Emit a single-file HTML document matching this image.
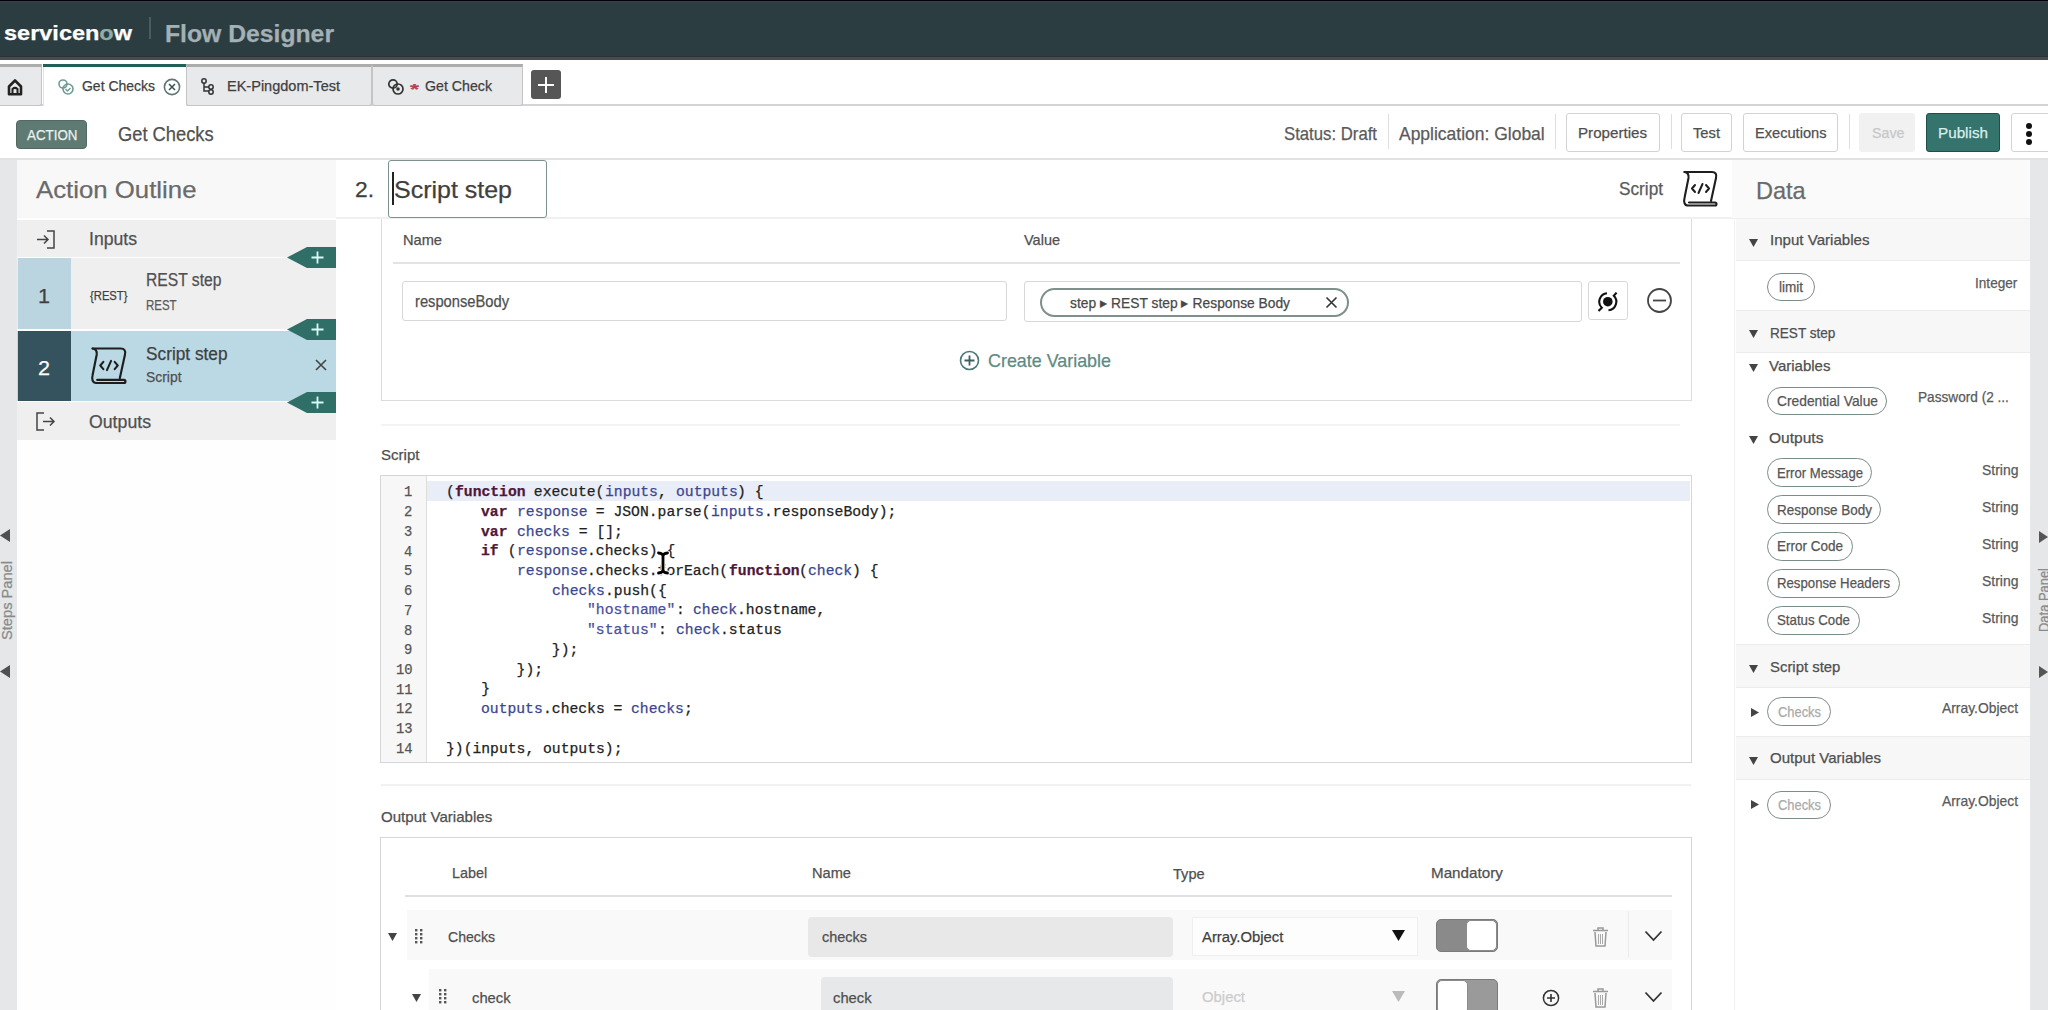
<!DOCTYPE html><html><head><meta charset="utf-8"><style>
html,body{margin:0;padding:0;}
body{width:2048px;height:1010px;overflow:hidden;position:relative;background:#fff;font-family:"Liberation Sans",sans-serif;}
.t{position:absolute;white-space:pre;transform-origin:0 0;-webkit-text-stroke:0.25px currentColor;}
.r{position:absolute;box-sizing:border-box;}
</style></head><body>
<div class="r" style="left:0px;top:0px;width:2048px;height:60px;background:#2c3d42;"></div>
<div class="r" style="left:0px;top:0px;width:2048px;height:1px;background:#02040a;"></div>
<div class="r" style="left:0px;top:1px;width:2048px;height:2px;background:#363c43;"></div>
<div class="r" style="left:0px;top:56px;width:2048px;height:1px;background:#293133;"></div>
<div class="r" style="left:0px;top:57px;width:2048px;height:3px;background:#474c4f;"></div>
<div class="t" style="left:4.00px;top:22.22px;font-size:21px;line-height:21px;color:#ffffff;font-weight:bold;transform:scaleX(1.1189);">servicen<span style="color:#8fada6">o</span>w</div>
<div class="r" style="left:149px;top:17px;width:2px;height:22px;background:#4b5b60;"></div>
<div class="t" style="left:165.00px;top:22.53px;font-size:23px;line-height:23px;color:#a3b0b4;font-weight:bold;transform:scaleX(1.0751);">Flow Designer</div>
<div class="r" style="left:0px;top:60px;width:2048px;height:46px;background:#ffffff;"></div>
<div class="r" style="left:0px;top:104px;width:2048px;height:2px;background:#d4d4d4;"></div>
<div class="r" style="left:-2px;top:64px;width:44px;height:42px;background:#e8e9eb;border:1px solid #c4c4c4;border-top:3px solid #acacac;border-radius:0 0 3px 0;"></div>
<svg class="r" style="left:7px;top:78px" width="16" height="18" viewBox="0 0 16 18"><path d="M2 8.5 L8 2.5 L14 8.5 V16.2 H2 Z" fill="none" stroke="#222" stroke-width="2.6" stroke-linejoin="round"/><path d="M5.5 16 V11 Q8 8.8 10.5 11 V16" fill="none" stroke="#222" stroke-width="2"/></svg>
<div class="r" style="left:43px;top:64px;width:144px;height:42px;background:#ffffff;border-left:1px solid #e2e2e2;border-right:1px solid #e2e2e2;"></div>
<div class="r" style="left:43px;top:64px;width:144px;height:3px;background:#225f59;"></div>
<svg class="r" style="left:57px;top:78px" width="17" height="17" viewBox="0 0 17 17"><circle cx="6" cy="6" r="4" fill="none" stroke="#6d9b93" stroke-width="1.6"/><circle cx="11" cy="11" r="5" fill="none" stroke="#6d9b93" stroke-width="1.6"/><path d="M8.5 11 l2 2 l3-3" fill="none" stroke="#6d9b93" stroke-width="1.4"/></svg>
<div class="t" style="left:82.00px;top:78.30px;font-size:15px;line-height:15px;color:#3f3f3f;transform:scaleX(0.9316);">Get Checks</div>
<svg class="r" style="left:163px;top:78px" width="18" height="18" viewBox="0 0 18 18"><circle cx="9" cy="9" r="7.6" fill="none" stroke="#5e7773" stroke-width="1.6"/><path d="M6 6 L12 12 M12 6 L6 12" stroke="#3e504d" stroke-width="1.5"/></svg>
<div class="r" style="left:186px;top:64px;width:186px;height:42px;background:#e8e9eb;border:1px solid #c4c4c4;border-top:3px solid #acacac;border-radius:0 0 3px 3px;"></div>
<svg class="r" style="left:201px;top:78px" width="14" height="17" viewBox="0 0 14 17"><circle cx="3" cy="3" r="2.2" fill="none" stroke="#333" stroke-width="1.5"/><path d="M3 5 V13 H8 M3 9 H8" fill="none" stroke="#333" stroke-width="1.5"/><circle cx="10" cy="9" r="2.2" fill="none" stroke="#333" stroke-width="1.5"/><circle cx="10" cy="14" r="2.2" fill="none" stroke="#333" stroke-width="1.5"/></svg>
<div class="t" style="left:227.00px;top:77.80px;font-size:15px;line-height:15px;color:#3f3f3f;transform:scaleX(0.9682);">EK-Pingdom-Test</div>
<div class="r" style="left:372px;top:64px;width:151px;height:42px;background:#e8e9eb;border:1px solid #c4c4c4;border-top:3px solid #acacac;border-radius:0 0 3px 3px;"></div>
<svg class="r" style="left:387px;top:78px" width="18" height="18" viewBox="0 0 18 18"><circle cx="6" cy="6" r="4.2" fill="none" stroke="#333" stroke-width="1.7"/><circle cx="11" cy="11" r="5" fill="none" stroke="#333" stroke-width="1.7"/><circle cx="11" cy="11" r="1.8" fill="#333"/></svg>
<div class="t" style="left:409.50px;top:80.80px;font-size:15px;line-height:15px;color:#b8404f;font-weight:bold;transform:scaleX(1.5419);">*</div>
<div class="t" style="left:425.00px;top:77.80px;font-size:15px;line-height:15px;color:#3f3f3f;transform:scaleX(0.9455);">Get Check</div>
<div class="r" style="left:531px;top:70px;width:30px;height:29px;background:#565656;border-radius:3px;"></div>
<div class="r" style="left:538px;top:83.5px;width:16px;height:2.0px;background:#fff;"></div>
<div class="r" style="left:545px;top:76.5px;width:2px;height:16.0px;background:#fff;"></div>
<div class="r" style="left:0px;top:106px;width:2048px;height:52px;background:#ffffff;"></div>
<div class="r" style="left:0px;top:158px;width:2048px;height:2px;background:#e2e2e2;"></div>
<div class="r" style="left:16px;top:120px;width:71px;height:29px;background:#5f7a72;border:1px solid #53695f;border-radius:4px;"></div>
<div class="t" style="left:26.50px;top:127.72px;font-size:14.5px;line-height:14.5px;color:#e8f2ee;transform:scaleX(0.9219);">ACTION</div>
<div class="t" style="left:118.00px;top:123.87px;font-size:20px;line-height:20px;color:#505050;transform:scaleX(0.9150);">Get Checks</div>
<div class="t" style="left:1284.00px;top:125.14px;font-size:18.5px;line-height:18.5px;color:#5a5a5a;transform:scaleX(0.9045);">Status: Draft</div>
<div class="r" style="left:1388px;top:114px;width:1px;height:35px;background:#dedede;"></div>
<div class="t" style="left:1398.80px;top:125.14px;font-size:18.5px;line-height:18.5px;color:#5a5a5a;transform:scaleX(0.9445);">Application: Global</div>
<div class="r" style="left:1555px;top:114px;width:1px;height:35px;background:#dedede;"></div>
<div class="r" style="left:1566px;top:113px;width:94px;height:39px;background:#fff;border:1px solid #d2d2d2;border-radius:3px;"></div>
<div class="t" style="left:1578.00px;top:124.88px;font-size:15.5px;line-height:15.5px;color:#4f4f4f;transform:scaleX(0.9767);">Properties</div>
<div class="r" style="left:1671px;top:114px;width:1px;height:35px;background:#dedede;"></div>
<div class="r" style="left:1681px;top:113px;width:51px;height:39px;background:#fff;border:1px solid #d2d2d2;border-radius:3px;"></div>
<div class="t" style="left:1692.70px;top:124.88px;font-size:15.5px;line-height:15.5px;color:#4f4f4f;transform:scaleX(0.9498);">Test</div>
<div class="r" style="left:1743px;top:113px;width:95px;height:39px;background:#fff;border:1px solid #d2d2d2;border-radius:3px;"></div>
<div class="t" style="left:1755.00px;top:124.88px;font-size:15.5px;line-height:15.5px;color:#4f4f4f;transform:scaleX(0.9430);">Executions</div>
<div class="r" style="left:1849px;top:114px;width:1px;height:35px;background:#dedede;"></div>
<div class="r" style="left:1859px;top:113px;width:56px;height:39px;background:#f1f1f1;border-radius:3px;"></div>
<div class="t" style="left:1871.60px;top:124.88px;font-size:15.5px;line-height:15.5px;color:#c8c8c8;transform:scaleX(0.9171);">Save</div>
<div class="r" style="left:1926px;top:113px;width:74px;height:39px;background:#35736d;border:1px solid #1f4f4a;border-radius:3px;"></div>
<div class="t" style="left:1938.00px;top:124.88px;font-size:15.5px;line-height:15.5px;color:#d9efec;transform:scaleX(0.9835);">Publish</div>
<div class="r" style="left:2011px;top:113px;width:49px;height:39px;background:#fff;border:1px solid #d2d2d2;border-radius:3px;"></div>
<div class="r" style="left:2026px;top:123px;width:6px;height:6px;border-radius:3px;background:#111;"></div>
<div class="r" style="left:2026px;top:131px;width:6px;height:6px;border-radius:3px;background:#111;"></div>
<div class="r" style="left:2026px;top:139px;width:6px;height:6px;border-radius:3px;background:#111;"></div>
<div class="r" style="left:0px;top:160px;width:17px;height:850px;background:#e5e7e8;"></div>
<svg class="r" style="left:0px;top:529px" width="10" height="13" viewBox="0 0 10 13"><path d="M0 6.5 L10 0 V13 Z" fill="#505050"/></svg>
<svg class="r" style="left:0px;top:665px" width="10" height="13" viewBox="0 0 10 13"><path d="M0 6.5 L10 0 V13 Z" fill="#505050"/></svg>
<div class="t" style="left:-0.7px;top:639.5px;font-size:15px;line-height:15px;color:#8a8a8a;transform:rotate(-90deg) scaleX(0.9766);transform-origin:0 0;">Steps Panel</div>
<div class="r" style="left:17px;top:160px;width:319px;height:850px;background:#fefefe;"></div>
<div class="r" style="left:17px;top:160px;width:319px;height:58px;background:#f8f8f8;"></div>
<div class="t" style="left:36.00px;top:178.08px;font-size:24px;line-height:24px;color:#6a6a6a;transform:scaleX(1.0742);">Action Outline</div>
<div class="r" style="left:17px;top:220px;width:319px;height:37px;background:#efefef;"></div>
<svg class="r" style="left:35px;top:229px" width="21" height="21" viewBox="0 0 21 21"><path d="M12 2 H19 V19 H12" fill="none" stroke="#444" stroke-width="1.5"/><path d="M2 10.5 H13 M9 6.5 L13 10.5 L9 14.5" fill="none" stroke="#444" stroke-width="1.5"/></svg>
<div class="t" style="left:89.00px;top:230.78px;font-size:17.5px;line-height:17.5px;color:#4f4f4f;transform:scaleX(1.0069);">Inputs</div>
<div class="r" style="left:17px;top:258px;width:319px;height:71px;background:#efefef;"></div>
<div class="r" style="left:18px;top:258px;width:53px;height:71px;background:#bad5e0;"></div>
<div class="t" style="left:38.00px;top:285.22px;font-size:21px;line-height:21px;color:#3f3f3f;transform:scaleX(1.0274);">1</div>
<div class="t" style="left:89.50px;top:288.99px;font-size:13px;line-height:13px;color:#3f3f3f;transform:scaleX(0.8649);">{REST}</div>
<div class="t" style="left:145.50px;top:272.18px;font-size:17.5px;line-height:17.5px;color:#4f4f4f;transform:scaleX(0.8956);">REST step</div>
<div class="t" style="left:145.50px;top:298.15px;font-size:14px;line-height:14px;color:#5a5a5a;transform:scaleX(0.8168);">REST</div>
<div class="r" style="left:17px;top:331px;width:319px;height:70px;background:#bbd9e4;"></div>
<div class="r" style="left:18px;top:331px;width:53px;height:70px;background:#34535e;"></div>
<div class="t" style="left:38.00px;top:357.22px;font-size:21px;line-height:21px;color:#ffffff;transform:scaleX(1.0274);">2</div>
<svg class="r" style="left:90px;top:346px" width="37" height="39" viewBox="0 0 36 37"><g fill="none" stroke="#1e1e1e" stroke-width="2.1" stroke-linejoin="round" stroke-linecap="round"><path d="M2.5 2 H30 C33.5 2 35 4.5 34 8 L29 31"/><path d="M2.5 2 C5.5 2.5 7 4.5 6.5 8 L2.5 28 C1.5 32 2.5 35.5 6 35.5 H33 C35 35.5 35 32.5 33 32.5 H7"/></g><g fill="none" stroke="#1e1e1e" stroke-width="2" stroke-linecap="round" stroke-linejoin="round"><path d="M13 15 L10 18.5 L13 22 M24 15 L27 18.5 L24 22 M20.5 14 L16.5 23"/></g></svg>
<div class="t" style="left:145.50px;top:345.88px;font-size:17.5px;line-height:17.5px;color:#3f3f3f;transform:scaleX(0.9858);">Script step</div>
<div class="t" style="left:145.50px;top:370.15px;font-size:14px;line-height:14px;color:#4f4f4f;transform:scaleX(0.9920);">Script</div>
<svg class="r" style="left:315px;top:359px" width="12" height="12" viewBox="0 0 12 12"><path d="M1 1 L11 11 M11 1 L1 11" stroke="#444" stroke-width="1.6"/></svg>
<div class="r" style="left:17px;top:402px;width:319px;height:38px;background:#efefef;"></div>
<svg class="r" style="left:35px;top:411px" width="21" height="21" viewBox="0 0 21 21"><path d="M9 2 H2 V19 H9" fill="none" stroke="#444" stroke-width="1.5"/><path d="M8 10.5 H19 M15 6.5 L19 10.5 L15 14.5" fill="none" stroke="#444" stroke-width="1.5"/></svg>
<div class="t" style="left:89.00px;top:414.18px;font-size:17.5px;line-height:17.5px;color:#4f4f4f;transform:scaleX(1.0117);">Outputs</div>
<svg class="r" style="left:287px;top:246.5px" width="49" height="21" viewBox="0 0 49 21"><path d="M0 10.5 L20 0 H49 V21 H20 Z" fill="#2f6f68"/><path d="M24.5 10.5 H36.5 M30.5 4.5 V16.5" stroke="#d8fbf6" stroke-width="1.8"/></svg>
<svg class="r" style="left:287px;top:318.5px" width="49" height="21" viewBox="0 0 49 21"><path d="M0 10.5 L20 0 H49 V21 H20 Z" fill="#2f6f68"/><path d="M24.5 10.5 H36.5 M30.5 4.5 V16.5" stroke="#d8fbf6" stroke-width="1.8"/></svg>
<svg class="r" style="left:287px;top:391.5px" width="49" height="21" viewBox="0 0 49 21"><path d="M0 10.5 L20 0 H49 V21 H20 Z" fill="#2f6f68"/><path d="M24.5 10.5 H36.5 M30.5 4.5 V16.5" stroke="#d8fbf6" stroke-width="1.8"/></svg>
<div class="r" style="left:336px;top:160px;width:1399px;height:58px;background:#fff;"></div>
<div class="r" style="left:336px;top:217px;width:1399px;height:2px;background:#f0f0f0;"></div>
<div class="t" style="left:355.40px;top:179.37px;font-size:22px;line-height:22px;color:#3f3f3f;transform:scaleX(1.0356);">2.</div>
<div class="r" style="left:388px;top:160px;width:159px;height:58px;background:#fff;border:1.5px solid #7d928e;border-radius:3px;"></div>
<div class="r" style="left:392px;top:172px;width:2px;height:33px;background:#222;"></div>
<div class="t" style="left:393.70px;top:177.88px;font-size:24px;line-height:24px;color:#3f3f3f;transform:scaleX(1.0407);">Script step</div>
<div class="t" style="left:1619.00px;top:180.58px;font-size:17.5px;line-height:17.5px;color:#5a5a5a;transform:scaleX(0.9836);">Script</div>
<svg class="r" style="left:1682px;top:170px" width="36" height="37" viewBox="0 0 36 37"><g fill="none" stroke="#1e1e1e" stroke-width="2.1" stroke-linejoin="round" stroke-linecap="round"><path d="M2.5 2 H30 C33.5 2 35 4.5 34 8 L29 31"/><path d="M2.5 2 C5.5 2.5 7 4.5 6.5 8 L2.5 28 C1.5 32 2.5 35.5 6 35.5 H33 C35 35.5 35 32.5 33 32.5 H7"/></g><g fill="none" stroke="#1e1e1e" stroke-width="2" stroke-linecap="round" stroke-linejoin="round"><path d="M13 15 L10 18.5 L13 22 M24 15 L27 18.5 L24 22 M20.5 14 L16.5 23"/></g></svg>
<div class="r" style="left:381px;top:219px;width:1311px;height:182px;background:#fff;border:1px solid #dcdcdc;border-top:none;"></div>
<div class="t" style="left:402.50px;top:232.30px;font-size:15px;line-height:15px;color:#4f4f4f;transform:scaleX(0.9747);">Name</div>
<div class="t" style="left:1023.50px;top:232.30px;font-size:15px;line-height:15px;color:#4f4f4f;transform:scaleX(0.9664);">Value</div>
<div class="r" style="left:393px;top:262px;width:1287px;height:2px;background:#e3e3e3;"></div>
<div class="r" style="left:402px;top:281px;width:605px;height:40px;background:#fff;border:1px solid #d8d8d8;border-radius:3px;"></div>
<div class="t" style="left:415.00px;top:293.85px;font-size:16px;line-height:16px;color:#4f4f4f;transform:scaleX(0.9189);">responseBody</div>
<div class="r" style="left:1024px;top:281px;width:558px;height:41px;background:#fff;border:1px solid #d8d8d8;border-radius:3px;"></div>
<div class="r" style="left:1040px;top:287.7px;width:309px;height:28.900000000000034px;background:#fff;border:2px solid #7f908c;border-radius:15px;"></div>
<div class="t" style="left:1069.70px;top:295.30px;font-size:15px;line-height:15px;color:#484848;transform:scaleX(0.9199);">step ▸ REST step ▸ Response Body</div>
<svg class="r" style="left:1325px;top:296px" width="13" height="13" viewBox="0 0 13 13"><path d="M1.5 1.5 L11.5 11.5 M11.5 1.5 L1.5 11.5" stroke="#333" stroke-width="1.6"/></svg>
<div class="r" style="left:1588px;top:281px;width:40px;height:39px;background:#fff;border:1px solid #d8d8d8;border-radius:3px;"></div>
<svg class="r" style="left:1597px;top:290px" width="22" height="22" viewBox="0 0 22 22"><circle cx="10.8" cy="11.7" r="4.8" fill="#111"/><path d="M10.0 3.2 A8.5 8.5 0 0 0 4.8 17.7 L1.5 21" fill="none" stroke="#111" stroke-width="2.1"/><path d="M19.6 2.6 L16.8 5.7 A8.5 8.5 0 0 1 11.5 20.2" fill="none" stroke="#111" stroke-width="2.1"/></svg>
<svg class="r" style="left:1646px;top:287px" width="27" height="27" viewBox="0 0 27 27"><circle cx="13.5" cy="13.5" r="11.5" fill="none" stroke="#444" stroke-width="1.8"/><path d="M7 13.5 H20" stroke="#444" stroke-width="1.8"/></svg>
<svg class="r" style="left:959px;top:350px" width="21" height="21" viewBox="0 0 21 21"><circle cx="10.5" cy="10.5" r="9" fill="none" stroke="#4d7873" stroke-width="1.6"/><path d="M5.5 10.5 H15.5 M10.5 5.5 V15.5" stroke="#3e605c" stroke-width="1.8"/></svg>
<div class="t" style="left:988.00px;top:351.41px;font-size:19px;line-height:19px;color:#5e8a84;transform:scaleX(0.9417);">Create Variable</div>
<div class="r" style="left:381px;top:424px;width:1299px;height:2px;background:#f3f3f3;"></div>
<div class="t" style="left:380.50px;top:447.30px;font-size:15px;line-height:15px;color:#4f4f4f;transform:scaleX(1.0041);">Script</div>
<div class="r" style="left:380px;top:475px;width:1312px;height:288px;background:#fff;border:1px solid #d6d6d6;"></div>
<div class="r" style="left:381px;top:476px;width:46px;height:286px;background:#f7f7f7;border-right:1px solid #dddddd;"></div>
<div class="r" style="left:427px;top:481px;width:1263px;height:20px;background:#e9edf7;"></div>
<div class="t" style="left:404.20px;top:485.42px;font-size:14.2px;line-height:14.2px;color:#555555;font-family:'Liberation Mono',monospace;transform:scaleX(0.9741);">1</div>
<div class="t" style="left:446.00px;top:485.04px;font-size:14.7px;line-height:14.7px;color:#222222;font-family:'Liberation Mono',monospace;transform:scaleX(1.0010);">(</div>
<div class="t" style="left:454.83px;top:485.04px;font-size:14.7px;line-height:14.7px;color:#4f1838;font-weight:bold;font-family:'Liberation Mono',monospace;transform:scaleX(1.0010);">function</div>
<div class="t" style="left:525.47px;top:485.04px;font-size:14.7px;line-height:14.7px;color:#222222;font-family:'Liberation Mono',monospace;transform:scaleX(1.0010);"> execute(</div>
<div class="t" style="left:604.94px;top:485.04px;font-size:14.7px;line-height:14.7px;color:#3b4690;font-family:'Liberation Mono',monospace;transform:scaleX(1.0010);">inputs</div>
<div class="t" style="left:657.92px;top:485.04px;font-size:14.7px;line-height:14.7px;color:#222222;font-family:'Liberation Mono',monospace;transform:scaleX(1.0010);">, </div>
<div class="t" style="left:675.58px;top:485.04px;font-size:14.7px;line-height:14.7px;color:#3b4690;font-family:'Liberation Mono',monospace;transform:scaleX(1.0010);">outputs</div>
<div class="t" style="left:737.39px;top:485.04px;font-size:14.7px;line-height:14.7px;color:#222222;font-family:'Liberation Mono',monospace;transform:scaleX(1.0010);">) {</div>
<div class="t" style="left:404.20px;top:505.15px;font-size:14.2px;line-height:14.2px;color:#555555;font-family:'Liberation Mono',monospace;transform:scaleX(0.9741);">2</div>
<div class="t" style="left:481.32px;top:504.77px;font-size:14.7px;line-height:14.7px;color:#4f1838;font-weight:bold;font-family:'Liberation Mono',monospace;transform:scaleX(1.0010);">var</div>
<div class="t" style="left:516.64px;top:504.77px;font-size:14.7px;line-height:14.7px;color:#3b4690;font-family:'Liberation Mono',monospace;transform:scaleX(1.0010);">response</div>
<div class="t" style="left:587.28px;top:504.77px;font-size:14.7px;line-height:14.7px;color:#222222;font-family:'Liberation Mono',monospace;transform:scaleX(1.0010);"> = JSON.parse(</div>
<div class="t" style="left:710.90px;top:504.77px;font-size:14.7px;line-height:14.7px;color:#3b4690;font-family:'Liberation Mono',monospace;transform:scaleX(1.0010);">inputs</div>
<div class="t" style="left:763.88px;top:504.77px;font-size:14.7px;line-height:14.7px;color:#222222;font-family:'Liberation Mono',monospace;transform:scaleX(1.0010);">.responseBody);</div>
<div class="t" style="left:404.20px;top:524.88px;font-size:14.2px;line-height:14.2px;color:#555555;font-family:'Liberation Mono',monospace;transform:scaleX(0.9741);">3</div>
<div class="t" style="left:481.32px;top:524.50px;font-size:14.7px;line-height:14.7px;color:#4f1838;font-weight:bold;font-family:'Liberation Mono',monospace;transform:scaleX(1.0010);">var</div>
<div class="t" style="left:516.64px;top:524.50px;font-size:14.7px;line-height:14.7px;color:#3b4690;font-family:'Liberation Mono',monospace;transform:scaleX(1.0010);">checks</div>
<div class="t" style="left:569.62px;top:524.50px;font-size:14.7px;line-height:14.7px;color:#222222;font-family:'Liberation Mono',monospace;transform:scaleX(1.0010);"> = [];</div>
<div class="t" style="left:404.20px;top:544.61px;font-size:14.2px;line-height:14.2px;color:#555555;font-family:'Liberation Mono',monospace;transform:scaleX(0.9741);">4</div>
<div class="t" style="left:481.32px;top:544.23px;font-size:14.7px;line-height:14.7px;color:#4f1838;font-weight:bold;font-family:'Liberation Mono',monospace;transform:scaleX(1.0010);">if</div>
<div class="t" style="left:498.98px;top:544.23px;font-size:14.7px;line-height:14.7px;color:#222222;font-family:'Liberation Mono',monospace;transform:scaleX(1.0010);"> (</div>
<div class="t" style="left:516.64px;top:544.23px;font-size:14.7px;line-height:14.7px;color:#3b4690;font-family:'Liberation Mono',monospace;transform:scaleX(1.0010);">response</div>
<div class="t" style="left:587.28px;top:544.23px;font-size:14.7px;line-height:14.7px;color:#222222;font-family:'Liberation Mono',monospace;transform:scaleX(1.0010);">.checks) {</div>
<div class="t" style="left:404.20px;top:564.34px;font-size:14.2px;line-height:14.2px;color:#555555;font-family:'Liberation Mono',monospace;transform:scaleX(0.9741);">5</div>
<div class="t" style="left:516.64px;top:563.96px;font-size:14.7px;line-height:14.7px;color:#3b4690;font-family:'Liberation Mono',monospace;transform:scaleX(1.0010);">response</div>
<div class="t" style="left:587.28px;top:563.96px;font-size:14.7px;line-height:14.7px;color:#222222;font-family:'Liberation Mono',monospace;transform:scaleX(1.0010);">.checks.forEach(</div>
<div class="t" style="left:728.56px;top:563.96px;font-size:14.7px;line-height:14.7px;color:#4f1838;font-weight:bold;font-family:'Liberation Mono',monospace;transform:scaleX(1.0010);">function</div>
<div class="t" style="left:799.20px;top:563.96px;font-size:14.7px;line-height:14.7px;color:#222222;font-family:'Liberation Mono',monospace;transform:scaleX(1.0010);">(</div>
<div class="t" style="left:808.03px;top:563.96px;font-size:14.7px;line-height:14.7px;color:#3b4690;font-family:'Liberation Mono',monospace;transform:scaleX(1.0010);">check</div>
<div class="t" style="left:852.18px;top:563.96px;font-size:14.7px;line-height:14.7px;color:#222222;font-family:'Liberation Mono',monospace;transform:scaleX(1.0010);">) {</div>
<div class="t" style="left:404.20px;top:584.07px;font-size:14.2px;line-height:14.2px;color:#555555;font-family:'Liberation Mono',monospace;transform:scaleX(0.9741);">6</div>
<div class="t" style="left:551.96px;top:583.69px;font-size:14.7px;line-height:14.7px;color:#3b4690;font-family:'Liberation Mono',monospace;transform:scaleX(1.0010);">checks</div>
<div class="t" style="left:604.94px;top:583.69px;font-size:14.7px;line-height:14.7px;color:#222222;font-family:'Liberation Mono',monospace;transform:scaleX(1.0010);">.push({</div>
<div class="t" style="left:404.20px;top:603.80px;font-size:14.2px;line-height:14.2px;color:#555555;font-family:'Liberation Mono',monospace;transform:scaleX(0.9741);">7</div>
<div class="t" style="left:587.28px;top:603.42px;font-size:14.7px;line-height:14.7px;color:#4a4fa0;font-family:'Liberation Mono',monospace;transform:scaleX(1.0010);">"hostname"</div>
<div class="t" style="left:675.58px;top:603.42px;font-size:14.7px;line-height:14.7px;color:#222222;font-family:'Liberation Mono',monospace;transform:scaleX(1.0010);">: </div>
<div class="t" style="left:693.24px;top:603.42px;font-size:14.7px;line-height:14.7px;color:#3b4690;font-family:'Liberation Mono',monospace;transform:scaleX(1.0010);">check</div>
<div class="t" style="left:737.39px;top:603.42px;font-size:14.7px;line-height:14.7px;color:#222222;font-family:'Liberation Mono',monospace;transform:scaleX(1.0010);">.hostname,</div>
<div class="t" style="left:404.20px;top:623.53px;font-size:14.2px;line-height:14.2px;color:#555555;font-family:'Liberation Mono',monospace;transform:scaleX(0.9741);">8</div>
<div class="t" style="left:587.28px;top:623.15px;font-size:14.7px;line-height:14.7px;color:#4a4fa0;font-family:'Liberation Mono',monospace;transform:scaleX(1.0010);">"status"</div>
<div class="t" style="left:657.92px;top:623.15px;font-size:14.7px;line-height:14.7px;color:#222222;font-family:'Liberation Mono',monospace;transform:scaleX(1.0010);">: </div>
<div class="t" style="left:675.58px;top:623.15px;font-size:14.7px;line-height:14.7px;color:#3b4690;font-family:'Liberation Mono',monospace;transform:scaleX(1.0010);">check</div>
<div class="t" style="left:719.73px;top:623.15px;font-size:14.7px;line-height:14.7px;color:#222222;font-family:'Liberation Mono',monospace;transform:scaleX(1.0010);">.status</div>
<div class="t" style="left:404.20px;top:643.26px;font-size:14.2px;line-height:14.2px;color:#555555;font-family:'Liberation Mono',monospace;transform:scaleX(0.9741);">9</div>
<div class="t" style="left:446.00px;top:642.88px;font-size:14.7px;line-height:14.7px;color:#222222;font-family:'Liberation Mono',monospace;transform:scaleX(1.0010);">            });</div>
<div class="t" style="left:395.90px;top:662.99px;font-size:14.2px;line-height:14.2px;color:#555555;font-family:'Liberation Mono',monospace;transform:scaleX(0.9741);">10</div>
<div class="t" style="left:446.00px;top:662.61px;font-size:14.7px;line-height:14.7px;color:#222222;font-family:'Liberation Mono',monospace;transform:scaleX(1.0010);">        });</div>
<div class="t" style="left:395.90px;top:682.72px;font-size:14.2px;line-height:14.2px;color:#555555;font-family:'Liberation Mono',monospace;transform:scaleX(0.9741);">11</div>
<div class="t" style="left:446.00px;top:682.34px;font-size:14.7px;line-height:14.7px;color:#222222;font-family:'Liberation Mono',monospace;transform:scaleX(1.0010);">    }</div>
<div class="t" style="left:395.90px;top:702.45px;font-size:14.2px;line-height:14.2px;color:#555555;font-family:'Liberation Mono',monospace;transform:scaleX(0.9741);">12</div>
<div class="t" style="left:481.32px;top:702.07px;font-size:14.7px;line-height:14.7px;color:#3b4690;font-family:'Liberation Mono',monospace;transform:scaleX(1.0010);">outputs</div>
<div class="t" style="left:543.13px;top:702.07px;font-size:14.7px;line-height:14.7px;color:#222222;font-family:'Liberation Mono',monospace;transform:scaleX(1.0010);">.checks = </div>
<div class="t" style="left:631.43px;top:702.07px;font-size:14.7px;line-height:14.7px;color:#3b4690;font-family:'Liberation Mono',monospace;transform:scaleX(1.0010);">checks</div>
<div class="t" style="left:684.41px;top:702.07px;font-size:14.7px;line-height:14.7px;color:#222222;font-family:'Liberation Mono',monospace;transform:scaleX(1.0010);">;</div>
<div class="t" style="left:395.90px;top:722.18px;font-size:14.2px;line-height:14.2px;color:#555555;font-family:'Liberation Mono',monospace;transform:scaleX(0.9741);">13</div>
<div class="t" style="left:395.90px;top:741.91px;font-size:14.2px;line-height:14.2px;color:#555555;font-family:'Liberation Mono',monospace;transform:scaleX(0.9741);">14</div>
<div class="t" style="left:446.00px;top:741.53px;font-size:14.7px;line-height:14.7px;color:#222222;font-family:'Liberation Mono',monospace;transform:scaleX(1.0010);">})(inputs, outputs);</div>
<svg class="r" style="left:655px;top:550px" width="16" height="26" viewBox="0 0 16 26"><path d="M3.5 3 Q8 3.5 8 6 Q8 3.5 12.5 3 M8 5 V21 M3.5 23 Q8 22.5 8 20 Q8 22.5 12.5 23" fill="none" stroke="#fff" stroke-width="5" stroke-linecap="round"/><path d="M3.5 3 Q8 3.5 8 6 Q8 3.5 12.5 3 M8 5 V21 M3.5 23 Q8 22.5 8 20 Q8 22.5 12.5 23" fill="none" stroke="#000" stroke-width="2.8" stroke-linecap="round"/></svg>
<div class="r" style="left:381px;top:784px;width:1310px;height:2px;background:#f1f1f1;"></div>
<div class="t" style="left:380.50px;top:809.30px;font-size:15px;line-height:15px;color:#4f4f4f;transform:scaleX(1.0052);">Output Variables</div>
<div class="r" style="left:380px;top:837px;width:1312px;height:175px;background:#fff;border:1px solid #d6d6d6;"></div>
<div class="t" style="left:451.80px;top:865.30px;font-size:15px;line-height:15px;color:#4f4f4f;transform:scaleX(0.9590);">Label</div>
<div class="t" style="left:812.00px;top:865.30px;font-size:15px;line-height:15px;color:#4f4f4f;transform:scaleX(0.9747);">Name</div>
<div class="t" style="left:1173.00px;top:866.30px;font-size:15px;line-height:15px;color:#4f4f4f;transform:scaleX(0.9748);">Type</div>
<div class="t" style="left:1430.60px;top:865.30px;font-size:15px;line-height:15px;color:#4f4f4f;transform:scaleX(1.0131);">Mandatory</div>
<div class="r" style="left:405px;top:895px;width:1267px;height:2px;background:#e0e0e0;"></div>
<div class="r" style="left:407px;top:910px;width:1265px;height:50px;background:#f9f9f9;"></div>
<svg class="r" style="left:387.5px;top:933px" width="9" height="8" viewBox="0 0 9 8"><path d="M0 0 H9 L4.5 8 Z" fill="#444"/></svg>
<svg class="r" style="left:415px;top:929px" width="8" height="15" viewBox="0 0 8 15"><g fill="#555"><rect x="0" y="0" width="2.4" height="2.4"/><rect x="5" y="0" width="2.4" height="2.4"/><rect x="0" y="4" width="2.4" height="2.4"/><rect x="5" y="4" width="2.4" height="2.4"/><rect x="0" y="8" width="2.4" height="2.4"/><rect x="5" y="8" width="2.4" height="2.4"/><rect x="0" y="12" width="2.4" height="2.4"/><rect x="5" y="12" width="2.4" height="2.4"/></g></svg>
<div class="t" style="left:448.00px;top:928.88px;font-size:15.5px;line-height:15.5px;color:#4f4f4f;transform:scaleX(0.9094);">Checks</div>
<div class="r" style="left:808px;top:917px;width:365px;height:40px;background:#e8e8e8;border-radius:4px;"></div>
<div class="t" style="left:821.50px;top:928.88px;font-size:15.5px;line-height:15.5px;color:#4f4f4f;transform:scaleX(0.9328);">checks</div>
<div class="r" style="left:1192px;top:917px;width:226px;height:39px;background:#fdfdfd;border:1px solid #efefef;"></div>
<div class="t" style="left:1201.60px;top:928.88px;font-size:15.5px;line-height:15.5px;color:#3f3f3f;transform:scaleX(0.9578);">Array.Object</div>
<svg class="r" style="left:1392px;top:930px" width="13" height="11" viewBox="0 0 13 11"><path d="M0 0 H13 L6.5 11 Z" fill="#111"/></svg>
<div class="r" style="left:1436px;top:919px;width:62px;height:33px;background:#8a8a8a;border:1.5px solid #7a7a7a;border-radius:5px;"></div>
<div class="r" style="left:1466px;top:920px;width:31px;height:31px;background:#fff;border:1.5px solid #8a8a8a;border-radius:5px;"></div>
<svg class="r" style="left:1592px;top:927px" width="17" height="20" viewBox="0 0 17 20"><path d="M1 3.5 H16 M6 3 V1 H11 V3" fill="none" stroke="#999" stroke-width="1.5"/><path d="M3 5 L4 19 H13 L14 5" fill="none" stroke="#999" stroke-width="1.5"/><path d="M6.5 7 V17 M8.5 7 V17 M10.5 7 V17" stroke="#aaa" stroke-width="1"/></svg>
<div class="r" style="left:1628px;top:911px;width:1px;height:47px;background:#ececec;"></div>
<svg class="r" style="left:1644px;top:930px" width="19" height="13" viewBox="0 0 19 13"><path d="M1.5 1.5 L9.5 10 L17.5 1.5" fill="none" stroke="#333" stroke-width="1.8"/></svg>
<div class="r" style="left:429px;top:969px;width:1243px;height:41px;background:#f9f9f9;"></div>
<svg class="r" style="left:411.5px;top:994px" width="9" height="8" viewBox="0 0 9 8"><path d="M0 0 H9 L4.5 8 Z" fill="#444"/></svg>
<svg class="r" style="left:439px;top:989px" width="8" height="15" viewBox="0 0 8 15"><g fill="#555"><rect x="0" y="0" width="2.4" height="2.4"/><rect x="5" y="0" width="2.4" height="2.4"/><rect x="0" y="4" width="2.4" height="2.4"/><rect x="5" y="4" width="2.4" height="2.4"/><rect x="0" y="8" width="2.4" height="2.4"/><rect x="5" y="8" width="2.4" height="2.4"/><rect x="0" y="12" width="2.4" height="2.4"/><rect x="5" y="12" width="2.4" height="2.4"/></g></svg>
<div class="t" style="left:472.40px;top:989.88px;font-size:15.5px;line-height:15.5px;color:#4f4f4f;transform:scaleX(0.9533);">check</div>
<div class="r" style="left:821px;top:977px;width:352px;height:38px;background:#e6e8ea;border-radius:4px;"></div>
<div class="t" style="left:833.00px;top:989.88px;font-size:15.5px;line-height:15.5px;color:#4f4f4f;transform:scaleX(0.9533);">check</div>
<div class="t" style="left:1201.60px;top:988.88px;font-size:15.5px;line-height:15.5px;color:#cccccc;transform:scaleX(0.9599);">Object</div>
<svg class="r" style="left:1392px;top:991px" width="13" height="11" viewBox="0 0 13 11"><path d="M0 0 H13 L6.5 11 Z" fill="#bbb"/></svg>
<div class="r" style="left:1436px;top:979px;width:62px;height:36px;background:#9a9a9a;border:1.5px solid #7a7a7a;border-radius:5px;"></div>
<div class="r" style="left:1437px;top:980px;width:31px;height:34px;background:#fff;border:1.5px solid #8a8a8a;border-radius:5px;"></div>
<svg class="r" style="left:1542px;top:989px" width="18" height="18" viewBox="0 0 18 18"><circle cx="9" cy="9" r="7.6" fill="none" stroke="#333" stroke-width="1.5"/><path d="M5 9 H13 M9 5 V13" stroke="#333" stroke-width="1.6"/></svg>
<svg class="r" style="left:1592px;top:988px" width="17" height="20" viewBox="0 0 17 20"><path d="M1 3.5 H16 M6 3 V1 H11 V3" fill="none" stroke="#999" stroke-width="1.5"/><path d="M3 5 L4 19 H13 L14 5" fill="none" stroke="#999" stroke-width="1.5"/><path d="M6.5 7 V17 M8.5 7 V17 M10.5 7 V17" stroke="#aaa" stroke-width="1"/></svg>
<svg class="r" style="left:1644px;top:991px" width="19" height="13" viewBox="0 0 19 13"><path d="M1.5 1.5 L9.5 10 L17.5 1.5" fill="none" stroke="#333" stroke-width="1.8"/></svg>
<div class="r" style="left:1732px;top:160px;width:298px;height:850px;background:#ffffff;"></div>
<div class="r" style="left:1732px;top:160px;width:298px;height:58px;background:#fafafa;"></div>
<div class="r" style="left:1732px;top:218px;width:298px;height:1px;background:#efefef;"></div>
<div class="t" style="left:1756.00px;top:178.68px;font-size:24px;line-height:24px;color:#6a6a6a;transform:scaleX(0.9803);">Data</div>
<div class="r" style="left:1734px;top:219px;width:1px;height:791px;background:#f2f2f2;"></div>
<div class="r" style="left:2030px;top:160px;width:18px;height:850px;background:#e5e7e8;"></div>
<svg class="r" style="left:2039px;top:531px" width="9" height="12" viewBox="0 0 9 12"><path d="M9 6 L0 0 V12 Z" fill="#555"/></svg>
<svg class="r" style="left:2039px;top:666px" width="9" height="12" viewBox="0 0 9 12"><path d="M9 6 L0 0 V12 Z" fill="#555"/></svg>
<div class="t" style="left:2036.3px;top:632px;font-size:15px;line-height:15px;color:#8a8a8a;transform:rotate(-90deg) scaleX(0.8623);transform-origin:0 0;">Data Panel</div>
<div class="r" style="left:1736px;top:219px;width:294px;height:42px;background:#f7f7f7;border-bottom:1px solid #ececec;"></div>
<svg class="r" style="left:1749px;top:239px" width="9" height="8" viewBox="0 0 9 8"><path d="M0 0 H9 L4.5 8 Z" fill="#444"/></svg>
<div class="t" style="left:1770.00px;top:232.30px;font-size:15px;line-height:15px;color:#4f4f4f;transform:scaleX(1.0055);">Input Variables</div>
<div class="r" style="left:1736px;top:261px;width:294px;height:49px;background:#fff;"></div>
<div class="r" style="left:1767px;top:273px;width:48px;height:28px;background:#fff;border:1.8px solid #7a8d88;border-radius:15px;"></div>
<div class="t" style="left:1779.00px;top:280.02px;font-size:14.5px;line-height:14.5px;color:#555;transform:scaleX(0.9312);">limit</div>
<div class="t" style="left:1975.00px;top:275.72px;font-size:14.5px;line-height:14.5px;color:#5a5a5a;transform:scaleX(0.9392);">Integer</div>
<div class="r" style="left:1736px;top:310px;width:294px;height:43px;background:#f7f7f7;border-top:1px solid #ececec;border-bottom:1px solid #ececec;"></div>
<svg class="r" style="left:1749px;top:330px" width="9" height="8" viewBox="0 0 9 8"><path d="M0 0 H9 L4.5 8 Z" fill="#444"/></svg>
<div class="t" style="left:1770.00px;top:324.90px;font-size:15px;line-height:15px;color:#4f4f4f;transform:scaleX(0.9051);">REST step</div>
<svg class="r" style="left:1749px;top:364px" width="9" height="8" viewBox="0 0 9 8"><path d="M0 0 H9 L4.5 8 Z" fill="#444"/></svg>
<div class="t" style="left:1768.60px;top:358.30px;font-size:15px;line-height:15px;color:#4f4f4f;transform:scaleX(0.9996);">Variables</div>
<div class="r" style="left:1767px;top:386.6px;width:120px;height:28.399999999999977px;background:#fff;border:1.8px solid #7a8d88;border-radius:15px;"></div>
<div class="t" style="left:1776.50px;top:393.82px;font-size:14.5px;line-height:14.5px;color:#555;transform:scaleX(0.9516);">Credential Value</div>
<div class="t" style="left:1917.60px;top:389.72px;font-size:14.5px;line-height:14.5px;color:#5a5a5a;transform:scaleX(0.9400);">Password (2 ...</div>
<svg class="r" style="left:1749px;top:436px" width="9" height="8" viewBox="0 0 9 8"><path d="M0 0 H9 L4.5 8 Z" fill="#444"/></svg>
<div class="t" style="left:1768.60px;top:429.80px;font-size:15px;line-height:15px;color:#4f4f4f;transform:scaleX(1.0356);">Outputs</div>
<div class="r" style="left:1767px;top:457.8px;width:105px;height:29.69999999999999px;background:#fff;border:1.8px solid #7a8d88;border-radius:15px;"></div>
<div class="t" style="left:1776.50px;top:465.67px;font-size:14.5px;line-height:14.5px;color:#555;transform:scaleX(0.9044);">Error Message</div>
<div class="t" style="left:1981.50px;top:462.52px;font-size:14.5px;line-height:14.5px;color:#5a5a5a;transform:scaleX(0.9636);">String</div>
<div class="r" style="left:1767px;top:495.4px;width:114px;height:28.600000000000023px;background:#fff;border:1.8px solid #7a8d88;border-radius:15px;"></div>
<div class="t" style="left:1776.50px;top:502.72px;font-size:14.5px;line-height:14.5px;color:#555;transform:scaleX(0.9280);">Response Body</div>
<div class="t" style="left:1981.50px;top:500.12px;font-size:14.5px;line-height:14.5px;color:#5a5a5a;transform:scaleX(0.9636);">String</div>
<div class="r" style="left:1767px;top:532px;width:86px;height:28.799999999999955px;background:#fff;border:1.8px solid #7a8d88;border-radius:15px;"></div>
<div class="t" style="left:1777.00px;top:539.42px;font-size:14.5px;line-height:14.5px;color:#555;transform:scaleX(0.9307);">Error Code</div>
<div class="t" style="left:1981.50px;top:536.72px;font-size:14.5px;line-height:14.5px;color:#5a5a5a;transform:scaleX(0.9636);">String</div>
<div class="r" style="left:1767px;top:569px;width:133px;height:28.600000000000023px;background:#fff;border:1.8px solid #7a8d88;border-radius:15px;"></div>
<div class="t" style="left:1777.00px;top:576.32px;font-size:14.5px;line-height:14.5px;color:#555;transform:scaleX(0.9103);">Response Headers</div>
<div class="t" style="left:1981.50px;top:573.72px;font-size:14.5px;line-height:14.5px;color:#5a5a5a;transform:scaleX(0.9636);">String</div>
<div class="r" style="left:1767px;top:606px;width:93px;height:28.799999999999955px;background:#fff;border:1.8px solid #7a8d88;border-radius:15px;"></div>
<div class="t" style="left:1777.00px;top:613.42px;font-size:14.5px;line-height:14.5px;color:#555;transform:scaleX(0.9148);">Status Code</div>
<div class="t" style="left:1981.50px;top:610.72px;font-size:14.5px;line-height:14.5px;color:#5a5a5a;transform:scaleX(0.9636);">String</div>
<div class="r" style="left:1736px;top:644px;width:294px;height:43.5px;background:#f7f7f7;border-top:1px solid #ececec;border-bottom:1px solid #ececec;"></div>
<svg class="r" style="left:1749px;top:665px" width="9" height="8" viewBox="0 0 9 8"><path d="M0 0 H9 L4.5 8 Z" fill="#444"/></svg>
<div class="t" style="left:1769.60px;top:659.00px;font-size:15px;line-height:15px;color:#4f4f4f;transform:scaleX(0.9935);">Script step</div>
<svg class="r" style="left:1750.5px;top:707.5px" width="8" height="9" viewBox="0 0 8 9"><path d="M0 0 L8 4.5 L0 9 Z" fill="#444"/></svg>
<div class="r" style="left:1767px;top:697.4px;width:64px;height:28.600000000000023px;background:#fff;border:1.8px solid #7d8d89;border-radius:15px;"></div>
<div class="t" style="left:1777.50px;top:704.72px;font-size:14.5px;line-height:14.5px;color:#aaaaaa;transform:scaleX(0.8893);">Checks</div>
<div class="t" style="left:1942.00px;top:700.72px;font-size:14.5px;line-height:14.5px;color:#5a5a5a;transform:scaleX(0.9559);">Array.Object</div>
<div class="r" style="left:1736px;top:736px;width:294px;height:44px;background:#f7f7f7;border-top:1px solid #ececec;border-bottom:1px solid #ececec;"></div>
<svg class="r" style="left:1749px;top:757px" width="9" height="8" viewBox="0 0 9 8"><path d="M0 0 H9 L4.5 8 Z" fill="#444"/></svg>
<div class="t" style="left:1769.60px;top:750.10px;font-size:15px;line-height:15px;color:#4f4f4f;transform:scaleX(1.0025);">Output Variables</div>
<svg class="r" style="left:1750.5px;top:799.5px" width="8" height="9" viewBox="0 0 8 9"><path d="M0 0 L8 4.5 L0 9 Z" fill="#444"/></svg>
<div class="r" style="left:1767px;top:790.5px;width:64px;height:28.5px;background:#fff;border:1.8px solid #7d8d89;border-radius:15px;"></div>
<div class="t" style="left:1777.50px;top:797.77px;font-size:14.5px;line-height:14.5px;color:#aaaaaa;transform:scaleX(0.8893);">Checks</div>
<div class="t" style="left:1942.00px;top:793.72px;font-size:14.5px;line-height:14.5px;color:#5a5a5a;transform:scaleX(0.9559);">Array.Object</div>
</body></html>
